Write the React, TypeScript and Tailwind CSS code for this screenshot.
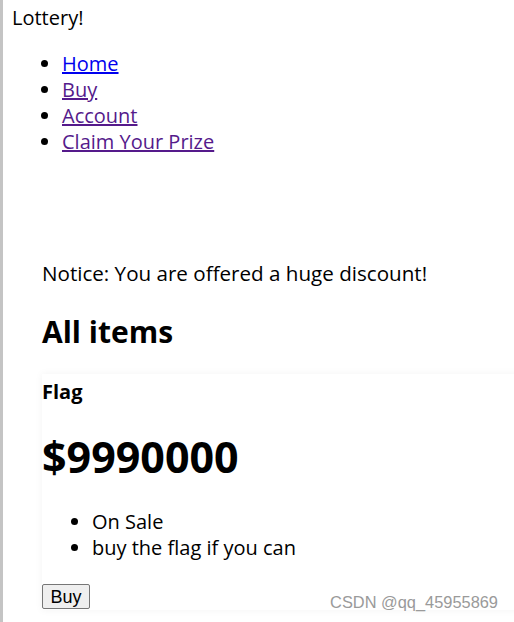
export default function App() {
  return (
    <div
      className="relative min-h-[622px] w-[514px] overflow-hidden bg-white text-[20px] leading-[26px] text-black"
      style={{ fontFamily: '"Open Sans", "Noto Sans", "Liberation Sans", sans-serif' }}
    >
      <div className="absolute left-0 top-0 h-full w-[3px] bg-[#c4c4c4]" />
      <div className="pl-[12px] pt-[5px]">
        <div>Lottery!</div>
        <ul className="mt-[20px] list-disc pl-[50px]">
          <li><a href="#" className="text-[#0000ee] underline">Home</a></li>
          <li><a href="#" className="text-[#551a8b] underline">Buy</a></li>
          <li><a href="#" className="text-[#551a8b] underline">Account</a></li>
          <li><a href="#" className="text-[#551a8b] underline">Claim Your Prize</a></li>
        </ul>
      </div>
      <div className="pl-[42px]">
        <p className="mt-[105px] text-[20.6px]">Notice: You are offered a huge discount!</p>
        <h2 className="mt-[26px] text-[30px] font-bold leading-[40px]">All items</h2>
        <div className="mt-[22px] w-[480px] bg-white pt-[5px] pb-[1px] shadow-[0_0_8px_rgba(0,0,0,0.05)]">
          <div className="text-[20px] font-bold leading-[26px]">Flag</div>
          <div className="mt-[25px] text-[43px] font-bold leading-[53px]">$9990000</div>
          <ul className="mt-[26px] list-disc pl-[50px]">
            <li>On Sale</li>
            <li>buy the flag if you can</li>
          </ul>
          <button
            className="mt-[23px] h-[25px] w-[48px] rounded-[2px] border border-[#767676] bg-[#efefef] text-[18px] leading-[20px]"
            style={{ fontFamily: '"Liberation Sans", Arial, sans-serif' }}
          >
            Buy
          </button>
        </div>
      </div>
      <div
        className="absolute bottom-[10px] right-[16px] text-[16.4px] leading-[20px] text-[#9a9a9a]"
        style={{ fontFamily: '"Liberation Sans", Arial, sans-serif' }}
      >
        CSDN @qq_45955869
      </div>
    </div>
  );
}
